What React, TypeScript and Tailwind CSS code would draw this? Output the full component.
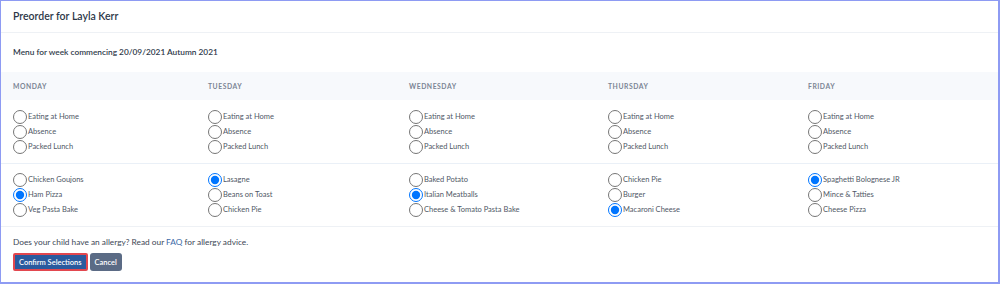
import React from 'react';

const days = [
  { name: 'Monday', meal: ['Chicken Goujons', 'Ham Pizza', 'Veg Pasta Bake'], picked: 1 },
  { name: 'Tuesday', meal: ['Lasagne', 'Beans on Toast', 'Chicken Pie'], picked: 0 },
  { name: 'Wednesday', meal: ['Baked Potato', 'Italian Meatballs', 'Cheese & Tomato Pasta Bake'], picked: 1 },
  { name: 'Thursday', meal: ['Chicken Pie', 'Burger', 'Macaroni Cheese'], picked: 2 },
  { name: 'Friday', meal: ['Spaghetti Bolognese JR', 'Mince & Tatties', 'Cheese Pizza'], picked: 0 },
];

const other = ['Eating at Home', 'Absence', 'Packed Lunch'];

const cols = 'grid grid-cols-[195px_201px_199px_200px_1fr]';

function Radio({ label, name, checked }: { label: string; name: string; checked?: boolean }) {
  return (
    <label className="flex h-[15px] items-center">
      <input
        type="radio"
        name={name}
        defaultChecked={checked}
        className="m-0 h-[14px] w-[14px] shrink-0"
      />
      <span className="ml-[1px] text-[7.5px] text-[#4f5866]">{label}</span>
    </label>
  );
}

export default function App() {
  return (
    <div className="w-[1000px] h-[285px] bg-white font-['Lato',sans-serif]">
      <div className="w-[1000px] h-[284px] border-l border-t border-r-2 border-b-2 border-[#8e9bf3] flex flex-col">
        <div className="h-[32px] flex items-center px-[12px] border-b border-[#eef1f5]">
          <h1 className="text-[10.5px] font-semibold text-[#2d3748]">Preorder for Layla Kerr</h1>
        </div>
        <div className="h-[39px] flex items-center px-[12px]">
          <p className="text-[8.3px] font-semibold text-[#2f3a4a]">
            Menu for week commencing 20/09/2021 Autumn 2021
          </p>
        </div>

        <div className={`${cols} h-[28px] bg-[#f7f9fc] items-center`}>
          {days.map((d) => (
            <div key={d.name} className="pl-[12px] text-[6.8px] font-bold uppercase tracking-[0.08em] text-[#7b8594]">
              {d.name}
            </div>
          ))}
        </div>

        <div className={`${cols} pt-[9px] pb-[9px] border-b border-[#eaf0f7]`}>
          {days.map((d) => (
            <div key={d.name} className="pl-[12px] flex flex-col">
              {other.map((o) => (
                <Radio key={o} label={o} name={d.name} />
              ))}
            </div>
          ))}
        </div>

        <div className={`${cols} pt-[8px] pb-[9px] border-b border-[#eef1f5]`}>
          {days.map((d) => (
            <div key={d.name} className="pl-[12px] flex flex-col">
              {d.meal.map((m, i) => (
                <Radio key={m} label={m} name={d.name + '-meal'} checked={i === d.picked} />
              ))}
            </div>
          ))}
        </div>

        <div className="px-[12px] pt-[9px]">
          <p className="text-[8.3px] text-[#3d4756]">
            Does your child have an allergy? Read our <a className="text-[#3b6aa8]">FAQ</a> for allergy advice.
          </p>
          <div className="mt-[5px] flex gap-[2px]">
            <button className="h-[18px] px-[4px] rounded-[2px] bg-[#2a5a9e] text-[7.5px] font-semibold text-white border-2 border-[#e2474f]">
              Confirm Selections
            </button>
            <button className="h-[18px] px-[5px] rounded-[3px] bg-[#5b6b85] text-[7.5px] font-semibold text-white">
              Cancel
            </button>
          </div>
        </div>
      </div>
    </div>
  );
}
